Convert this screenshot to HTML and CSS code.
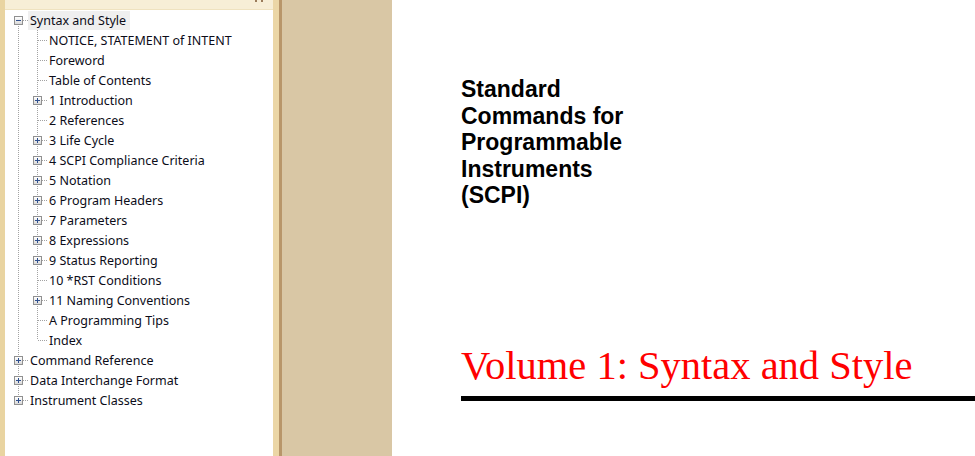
FILE: index.html
```
<!DOCTYPE html>
<html>
<head>
<meta charset="utf-8">
<link rel="stylesheet" href="styles.css">
</head>
<body>
<div class="app">
  <div class="edge"></div>
  <aside class="sidebar">
    <div class="head">
      <svg class="pin" width="9" height="3" viewBox="0 0 9 3"><rect x="0" y="0" width="2" height="2" fill="#9a7b5a"/><rect x="6" y="0" width="2" height="2" fill="#9a7b5a"/></svg>
    </div>
    <div class="tree">
      <div class="row"><span class="c b h"><span class="box"></span></span><span class="label sel">Syntax and Style</span></div>
      <div class="row"><span class="c t b"></span><span class="c t b h"></span><span class="label">NOTICE, STATEMENT of INTENT</span></div>
      <div class="row"><span class="c t b"></span><span class="c t b h"></span><span class="label">Foreword</span></div>
      <div class="row"><span class="c t b"></span><span class="c t b h"></span><span class="label">Table of Contents</span></div>
      <div class="row"><span class="c t b"></span><span class="c t b h"><span class="box plus"></span></span><span class="label">1 Introduction</span></div>
      <div class="row"><span class="c t b"></span><span class="c t b h"></span><span class="label">2 References</span></div>
      <div class="row"><span class="c t b"></span><span class="c t b h"><span class="box plus"></span></span><span class="label">3 Life Cycle</span></div>
      <div class="row"><span class="c t b"></span><span class="c t b h"><span class="box plus"></span></span><span class="label">4 SCPI Compliance Criteria</span></div>
      <div class="row"><span class="c t b"></span><span class="c t b h"><span class="box plus"></span></span><span class="label">5 Notation</span></div>
      <div class="row"><span class="c t b"></span><span class="c t b h"><span class="box plus"></span></span><span class="label">6 Program Headers</span></div>
      <div class="row"><span class="c t b"></span><span class="c t b h"><span class="box plus"></span></span><span class="label">7 Parameters</span></div>
      <div class="row"><span class="c t b"></span><span class="c t b h"><span class="box plus"></span></span><span class="label">8 Expressions</span></div>
      <div class="row"><span class="c t b"></span><span class="c t b h"><span class="box plus"></span></span><span class="label">9 Status Reporting</span></div>
      <div class="row"><span class="c t b"></span><span class="c t b h"></span><span class="label">10 *RST Conditions</span></div>
      <div class="row"><span class="c t b"></span><span class="c t b h"><span class="box plus"></span></span><span class="label">11 Naming Conventions</span></div>
      <div class="row"><span class="c t b"></span><span class="c t b h"></span><span class="label">A Programming Tips</span></div>
      <div class="row"><span class="c t b"></span><span class="c t h"></span><span class="label">Index</span></div>
      <div class="row"><span class="c t b h"><span class="box plus"></span></span><span class="label">Command Reference</span></div>
      <div class="row"><span class="c t b h"><span class="box plus"></span></span><span class="label">Data Interchange Format</span></div>
      <div class="row"><span class="c t h"><span class="box plus"></span></span><span class="label">Instrument Classes</span></div>
    </div>
  </aside>
  <div class="split"></div>
  <div class="desk"></div>
  <main class="page">
    <h1 class="title">Standard<br>Commands for<br>Programmable<br>Instruments<br>(SCPI)</h1>
    <h2 class="volume">Volume 1: Syntax and Style</h2>
    <div class="rule"></div>
  </main>
</div>
</body>
</html>
```
FILE: styles.css
```
html, body {
  margin: 0;
  padding: 0;
  background: #fff;
}
.app {
  display: flex;
  width: 975px;
  height: 456px;
  overflow: hidden;
}
.edge {
  position: relative;
  width: 5px;
  flex: none;
  background: #e9d4a1;
}
.edge::after {
  content: "";
  position: absolute;
  left: 1px;
  top: 62px;
  border-style: solid;
  border-width: 5px 4px 5px 4px;
  border-color: transparent #fff transparent transparent;
}
.sidebar {
  width: 268px;
  flex: none;
  background: #fff;
  display: flex;
  flex-direction: column;
}
.head {
  height: 9px;
  background: #f7eed6;
  border-bottom: 1px solid #efe2bf;
  display: flex;
  justify-content: flex-end;
  align-items: flex-start;
  padding-right: 9px;
}
.pin {
  display: block;
}
.tree {
  padding-left: 4px;
  font-family: "Noto Sans", "Open Sans", sans-serif;
  font-size: 12.5px;
  color: #0c0c18;
}
.row {
  display: flex;
  height: 20px;
  align-items: center;
  white-space: nowrap;
}
.c {
  --dv: repeating-linear-gradient(to bottom, #a3a3a3 0 1px, transparent 1px 2px);
  --dh: repeating-linear-gradient(to right, #a3a3a3 0 1px, transparent 1px 2px);
  flex: none;
  width: 19px;
  height: 20px;
  box-sizing: border-box;
  padding: 6px 0 0 5px;
  background-image: var(--a, none), var(--b, none), var(--h, none);
  background-repeat: no-repeat;
  background-size: 1px 10px, 1px 10px, 9px 1px;
  background-position: 9px 0, 9px 10px, 10px 10px;
}
.t { --a: var(--dv); }
.b { --b: var(--dv); }
.h { --h: var(--dh); }
.box {
  display: block;
  width: 9px;
  height: 9px;
  box-sizing: border-box;
  border: 1px solid #909090;
  background:
    linear-gradient(#2e4f8e, #2e4f8e) center / 5px 1px no-repeat,
    linear-gradient(#ffffff, #d9d9d9);
}
.box.plus {
  background:
    linear-gradient(#2e4f8e, #2e4f8e) center / 5px 1px no-repeat,
    linear-gradient(#2e4f8e, #2e4f8e) center / 1px 5px no-repeat,
    linear-gradient(#ffffff, #d9d9d9);
}
.label {
  height: 19px;
  line-height: 19px;
  padding: 0 4px 0 2px;
}
.label.sel {
  background: #efefef;
}
.split {
  width: 6px;
  flex: none;
  background: #ebd6a6;
  border-right: 3px solid #b8966a;
}
.desk {
  width: 110px;
  flex: none;
  background: #d9c7a5;
}
.page {
  flex: 1;
  background: #fff;
  padding: 76px 0 0 69px;
}
.title {
  margin: 0;
  font-family: "Liberation Sans", Arial, sans-serif;
  font-weight: bold;
  font-size: 23px;
  line-height: 26.6px;
  color: #000;
}
.volume {
  margin: 133px 0 0 0;
  font-family: "Liberation Serif", "Times New Roman", serif;
  font-weight: normal;
  font-size: 40.5px;
  line-height: 48px;
  color: #ff0000;
  white-space: nowrap;
}
.rule {
  margin-top: 6px;
  height: 5px;
  background: #000;
}
```
